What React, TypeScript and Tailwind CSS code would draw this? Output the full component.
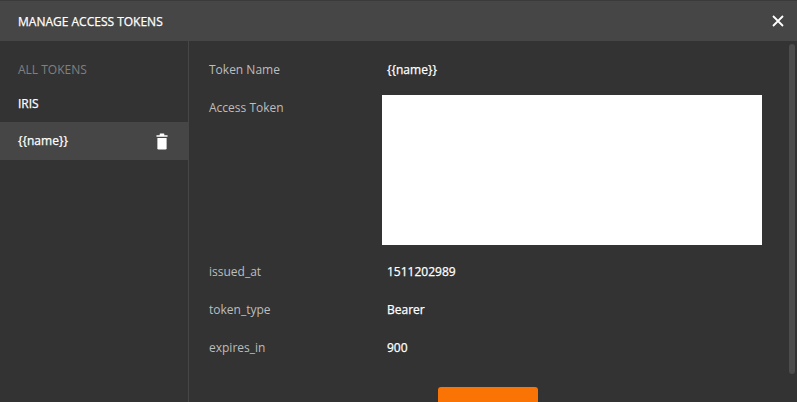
import React from "react";

function Row({ label, value, className = "" }: { label: string; value: string; className?: string }) {
  return (
    <div className={`flex h-[38px] items-center ${className}`}>
      <div className="w-[178px] text-[#bdbdbd]">{label}</div>
      <div className="text-white [-webkit-text-stroke:0.25px_white]">{value}</div>
    </div>
  );
}

export default function App() {
  return (
    <div className="relative flex h-[402px] w-[797px] flex-col overflow-hidden bg-[#333333] font-['Open_Sans',sans-serif] text-[12px]">
      <header className="flex h-[41px] shrink-0 items-center justify-between border-t border-[#3a3a3a] bg-[#464646] pl-[18px] pr-[12px] pt-[1px]">
        <span className="text-white [-webkit-text-stroke:0.25px_white]">MANAGE ACCESS TOKENS</span>
        <svg width="14" height="14" viewBox="0 0 14 14" fill="none" stroke="white" strokeWidth="1.8" className="-mt-[1px]">
          <path d="M2 2 L12 12 M12 2 L2 12" />
        </svg>
      </header>
      <div className="flex min-h-0 flex-1">
        <aside className="w-[189px] shrink-0 border-r border-[#464646]">
          <div className="flex h-[43px] items-end pb-[5px] pl-[18px] text-[#808080]">ALL TOKENS</div>
          <div className="flex h-[38px] items-center pl-[18px] pt-[1px] text-white [-webkit-text-stroke:0.25px_white]">IRIS</div>
          <div className="flex h-[38px] items-center justify-between bg-[#464646] pl-[18px] pr-[20px] text-white [-webkit-text-stroke:0.25px_white]">
            <span>{"{{name}}"}</span>
            <svg width="12" height="17" viewBox="0 0 13 16" fill="white" preserveAspectRatio="none">
              <path d="M0.5 2.2 H4 V1 Q4 0.4 4.6 0.4 H8.4 Q9 0.4 9 1 V2.2 H12.5 V3.6 H0.5 Z" />
              <path d="M1.5 4.6 H11.5 V14.4 Q11.5 15.6 10.3 15.6 H2.7 Q1.5 15.6 1.5 14.4 Z" />
            </svg>
          </div>
        </aside>
        <main className="min-w-0 flex-1 pl-[20px] pt-[10px]">
          <Row label="Token Name" value="{{name}}" />
          <div className="flex pt-[6px]">
            <div className="w-[173px] pt-[4px] text-[#bdbdbd]">Access Token</div>
            <div className="h-[150px] w-[380px] bg-white" />
          </div>
          <Row label="issued_at" value="1511202989" className="mt-[8px]" />
          <Row label="token_type" value="Bearer" />
          <Row label="expires_in" value="900" />
          <div className="mt-[20px] h-[15px] w-[100px] translate-x-[229px] rounded-t-[3px] bg-[#f97305]" />
        </main>
      </div>
      <div className="absolute left-[789px] top-[44px] h-[330px] w-[6px] rounded-full bg-[#4c4c4c]" />
    </div>
  );
}
